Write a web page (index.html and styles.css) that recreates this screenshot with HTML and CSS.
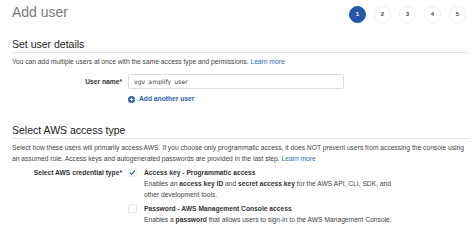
FILE: index.html
```html
<!DOCTYPE html>
<html lang="en">
<head>
    <meta charset="UTF-8">
    <meta name="viewport" content="width=device-width, initial-scale=1.0">
    <title>Add user</title>
    <link rel="stylesheet" href="styles.css">
</head>
<body>
    <div class="page">
        <div class="top">
            <h1>Add user</h1>
            <ol class="steps">
                <li class="step active">1</li>
                <li class="step">2</li>
                <li class="step">3</li>
                <li class="step">4</li>
                <li class="step">5</li>
            </ol>
        </div>

        <h2>Set user details</h2>
        <p class="info">You can add multiple users at once with the same access type and permissions. <a href="#">Learn more</a></p>

        <div class="row name-row">
            <label for="username">User name*</label>
            <input type="text" id="username" value="vgv_amplify_user">
        </div>
        <div class="row add-row">
            <span></span>
            <a href="#" class="add-user">
                <svg width="7" height="7" viewBox="0 0 14 14"><circle cx="7" cy="7" r="7" fill="#2b5fa8"/><path d="M7 3.5v7M3.5 7h7" stroke="#fff" stroke-width="2.4"/></svg>
                Add another user
            </a>
        </div>

        <h2 class="second">Select AWS access type</h2>
        <p class="info">Select how these users will primarily access AWS. If you choose only programmatic access, it does NOT prevent users from accessing the console using an assumed role. Access keys and autogenerated passwords are provided in the last step. <a href="#">Learn more</a></p>

        <div class="row cred-row">
            <label>Select AWS credential type*</label>
            <div class="options">
                <div class="option">
                    <span class="box checked">
                        <svg width="7" height="7" viewBox="0 0 10 10"><path d="M1.5 5.2l2.3 2.4L8.6 2" fill="none" stroke="#2b5fa8" stroke-width="1.8"/></svg>
                    </span>
                    <div class="option-text">
                        <div class="option-title">Access key - Programmatic access</div>
                        <div class="option-desc">Enables an <b>access key ID</b> and <b>secret access key</b> for the AWS API, CLI, SDK, and other development tools.</div>
                    </div>
                </div>
                <div class="option">
                    <span class="box"></span>
                    <div class="option-text">
                        <div class="option-title">Password - AWS Management Console access</div>
                        <div class="option-desc">Enables a <b>password</b> that allows users to sign-in to the AWS Management Console.</div>
                    </div>
                </div>
            </div>
        </div>
    </div>
</body>
</html>
```

FILE: styles.css
```css
body {
    font-family: "Liberation Sans", Arial, sans-serif;
    margin: 0;
    padding: 0;
    background-color: #fff;
    color: #444;
    font-size: 6.7px;
}
.page {
    padding: 0 4px 0 12px;
}
.top {
    display: flex;
    justify-content: space-between;
    align-items: center;
    height: 28px;
}
h1 {
    margin: 0;
    font-size: 14px;
    font-weight: normal;
    color: #7a7a7a;
    line-height: 18px;
    margin-top: -4px;
}
.steps {
    display: flex;
    gap: 8px;
    list-style: none;
    margin: 0 4px 0 0;
    padding: 0;
}
.step {
    width: 15px;
    height: 15px;
    border: 1px solid #eee;
    border-radius: 50%;
    display: flex;
    align-items: center;
    justify-content: center;
    font-size: 6px;
    font-weight: bold;
    color: #444;
    background: #fff;
}
.step.active {
    background-color: #2559a8;
    border-color: #2559a8;
    color: #fff;
}
h2 {
    margin: 9px 0 0 0;
    font-size: 10.5px;
    font-weight: normal;
    color: #222;
    line-height: 14px;
    padding-bottom: 1px;
    border-bottom: 1px solid #e4e4e4;
}
h2.second {
    margin-top: 19px;
}
.info {
    margin: 3px 0 0 0;
    line-height: 11px;
    color: #444;
}
a {
    color: #2b6cb8;
    text-decoration: none;
}
.row {
    display: grid;
    grid-template-columns: 110px 1fr;
    column-gap: 6px;
    align-items: center;
}
label {
    text-align: right;
    font-weight: bold;
    color: #333;
}
.name-row {
    margin-top: 7px;
}
input[type="text"] {
    width: 216px;
    height: 15px;
    box-sizing: border-box;
    border: 1px solid #ddd;
    border-radius: 2px;
    padding: 0 5px;
    font-family: "DejaVu Sans", sans-serif;
    font-size: 6.2px;
    color: #444;
}
.add-row {
    margin-top: 5px;
}
.add-user {
    display: flex;
    align-items: center;
    gap: 4px;
    font-weight: bold;
    color: #2b5fa8;
    line-height: 10px;
}
.cred-row {
    margin-top: 3px;
    align-items: start;
}
.cred-row label {
    line-height: 11px;
}
.options {
    display: flex;
    flex-direction: column;
    gap: 3px;
}
.option {
    display: flex;
    gap: 7px;
    align-items: flex-start;
}
.box {
    width: 9px;
    height: 9px;
    box-sizing: border-box;
    border: 1px solid #e2e2e2;
    border-radius: 2px;
    margin-top: 1px;
    display: flex;
    align-items: center;
    justify-content: center;
    flex-shrink: 0;
}
.box.checked {
    border-color: #f0f0f0;
}
.option-text {
    line-height: 11px;
    width: 252px;
}
.option-title {
    font-weight: bold;
    color: #333;
}
.option-desc b {
    color: #333;
}
```
